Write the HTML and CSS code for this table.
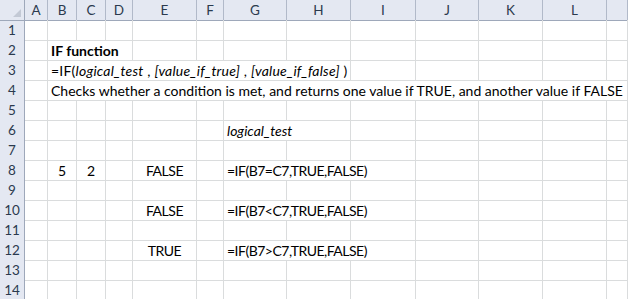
FILE: index.html
```html
<!DOCTYPE html>
<html>
<head>
<meta charset="utf-8">
<link rel="stylesheet" href="styles.css">
</head>
<body>
<div class="sheet">
  <div class="row hd">
    <div class="c corner"></div>
    <div class="c">A</div><div class="c">B</div><div class="c">C</div><div class="c">D</div>
    <div class="c">E</div><div class="c">F</div><div class="c">G</div><div class="c">H</div>
    <div class="c">I</div><div class="c">J</div><div class="c">K</div><div class="c">L</div><div class="c"></div>
  </div>
  <div class="row">
    <div class="c rh">1</div>
    <div class="c"></div><div class="c"></div><div class="c"></div><div class="c"></div><div class="c"></div><div class="c"></div>
    <div class="c"></div><div class="c"></div><div class="c"></div><div class="c"></div><div class="c"></div><div class="c"></div><div class="c"></div>
  </div>
  <div class="row">
    <div class="c rh">2</div>
    <div class="c"></div><div class="c s-bd bold">IF function</div><div class="c"></div><div class="c"></div><div class="c"></div>
    <div class="c"></div><div class="c"></div><div class="c"></div><div class="c"></div><div class="c"></div><div class="c"></div>
  </div>
  <div class="row">
    <div class="c rh">3</div>
    <div class="c"></div><div class="c s-bh loose">=IF(<i>logical_test</i> , <i>[value_if_true]</i> , <i>[value_if_false]</i> )</div>
    <div class="c"></div><div class="c"></div><div class="c"></div><div class="c"></div><div class="c"></div>
  </div>
  <div class="row">
    <div class="c rh">4</div>
    <div class="c"></div><div class="c s-bm">Checks whether a condition is met, and returns one value if TRUE, and another value if FALSE</div>
  </div>
  <div class="row">
    <div class="c rh">5</div>
    <div class="c"></div><div class="c"></div><div class="c"></div><div class="c"></div><div class="c"></div><div class="c"></div>
    <div class="c"></div><div class="c"></div><div class="c"></div><div class="c"></div><div class="c"></div><div class="c"></div><div class="c"></div>
  </div>
  <div class="row">
    <div class="c rh">6</div>
    <div class="c"></div><div class="c"></div><div class="c"></div><div class="c"></div><div class="c"></div><div class="c"></div>
    <div class="c s-gh"><i>logical_test</i></div><div class="c"></div><div class="c"></div><div class="c"></div><div class="c"></div><div class="c"></div>
  </div>
  <div class="row">
    <div class="c rh">7</div>
    <div class="c"></div><div class="c"></div><div class="c"></div><div class="c"></div><div class="c"></div><div class="c"></div>
    <div class="c"></div><div class="c"></div><div class="c"></div><div class="c"></div><div class="c"></div><div class="c"></div><div class="c"></div>
  </div>
  <div class="row">
    <div class="c rh">8</div>
    <div class="c"></div><div class="c ctr">5</div><div class="c ctr">2</div><div class="c"></div><div class="c ctr tight">FALSE</div><div class="c"></div>
    <div class="c s-gi tight">=IF(B7=C7,TRUE,FALSE)</div><div class="c"></div><div class="c"></div><div class="c"></div><div class="c"></div>
  </div>
  <div class="row">
    <div class="c rh">9</div>
    <div class="c"></div><div class="c"></div><div class="c"></div><div class="c"></div><div class="c"></div><div class="c"></div>
    <div class="c"></div><div class="c"></div><div class="c"></div><div class="c"></div><div class="c"></div><div class="c"></div><div class="c"></div>
  </div>
  <div class="row">
    <div class="c rh">10</div>
    <div class="c"></div><div class="c"></div><div class="c"></div><div class="c"></div><div class="c ctr tight">FALSE</div><div class="c"></div>
    <div class="c s-gi tight">=IF(B7&lt;C7,TRUE,FALSE)</div><div class="c"></div><div class="c"></div><div class="c"></div><div class="c"></div>
  </div>
  <div class="row">
    <div class="c rh">11</div>
    <div class="c"></div><div class="c"></div><div class="c"></div><div class="c"></div><div class="c"></div><div class="c"></div>
    <div class="c"></div><div class="c"></div><div class="c"></div><div class="c"></div><div class="c"></div><div class="c"></div><div class="c"></div>
  </div>
  <div class="row">
    <div class="c rh">12</div>
    <div class="c"></div><div class="c"></div><div class="c"></div><div class="c"></div><div class="c ctr tight">TRUE</div><div class="c"></div>
    <div class="c s-gi tight">=IF(B7&gt;C7,TRUE,FALSE)</div><div class="c"></div><div class="c"></div><div class="c"></div><div class="c"></div>
  </div>
  <div class="row">
    <div class="c rh">13</div>
    <div class="c"></div><div class="c"></div><div class="c"></div><div class="c"></div><div class="c"></div><div class="c"></div>
    <div class="c"></div><div class="c"></div><div class="c"></div><div class="c"></div><div class="c"></div><div class="c"></div><div class="c"></div>
  </div>
  <div class="row">
    <div class="c rh">14</div>
    <div class="c"></div><div class="c"></div><div class="c"></div><div class="c"></div><div class="c"></div><div class="c"></div>
    <div class="c"></div><div class="c"></div><div class="c"></div><div class="c"></div><div class="c"></div><div class="c"></div><div class="c"></div>
  </div>
</div>
</body>
</html>
```
FILE: styles.css
```css
* { box-sizing: border-box; }
html, body { margin: 0; padding: 0; background: #fff; }
body {
  font-family: Lato, "Open Sans", sans-serif;
  font-size: 14px;
  color: #000;
}
.sheet {
  width: 628px;
  height: 299px;
  overflow: hidden;
}
.row {
  display: grid;
  grid-template-columns: 25px 23px 29px 29px 27px 64px 27px 63px 64px 65px 63px 64px 64px 1fr;
  height: 20px;
}
.c {
  border-right: 1px solid #dadcdd;
  border-bottom: 1px solid #dadcdd;
  padding: 1px 3px 0;
  line-height: 19px;
  white-space: nowrap;
  min-width: 0;
}
.hd .c {
  background: #e4e8f2;
  border-right: 1px solid #b1b9c9;
  border-bottom: 1px solid #9ea8ba;
  text-align: center;
  font-size: 13.5px;
  color: #2b3a4e;
  padding: 1px 0 0;
}
.hd .corner {
  position: relative;
  border-right-color: #9ea8ba;
}
.hd .corner::after {
  content: "";
  position: absolute;
  right: 3px;
  bottom: 3px;
  width: 8px;
  height: 8px;
  background: #c3c9d5;
  clip-path: polygon(100% 0, 100% 100%, 0 100%);
}
.c.rh {
  background: #e4e8f2;
  border-right: 1px solid #9ea8ba;
  border-bottom: 1px solid #c0c7d4;
  text-align: center;
  font-size: 13.5px;
  color: #2b3a4e;
  padding: 1px 0 0;
}
.bold { font-weight: 700; }
.ctr { text-align: center; }
.tight { letter-spacing: -0.5px; }
.loose { letter-spacing: 0.22px; }
.s-bd { grid-column: span 3; }
.s-bh { grid-column: span 7; }
.s-bm { grid-column: span 12; }
.s-gh { grid-column: span 2; }
.s-gi { grid-column: span 3; }
```
